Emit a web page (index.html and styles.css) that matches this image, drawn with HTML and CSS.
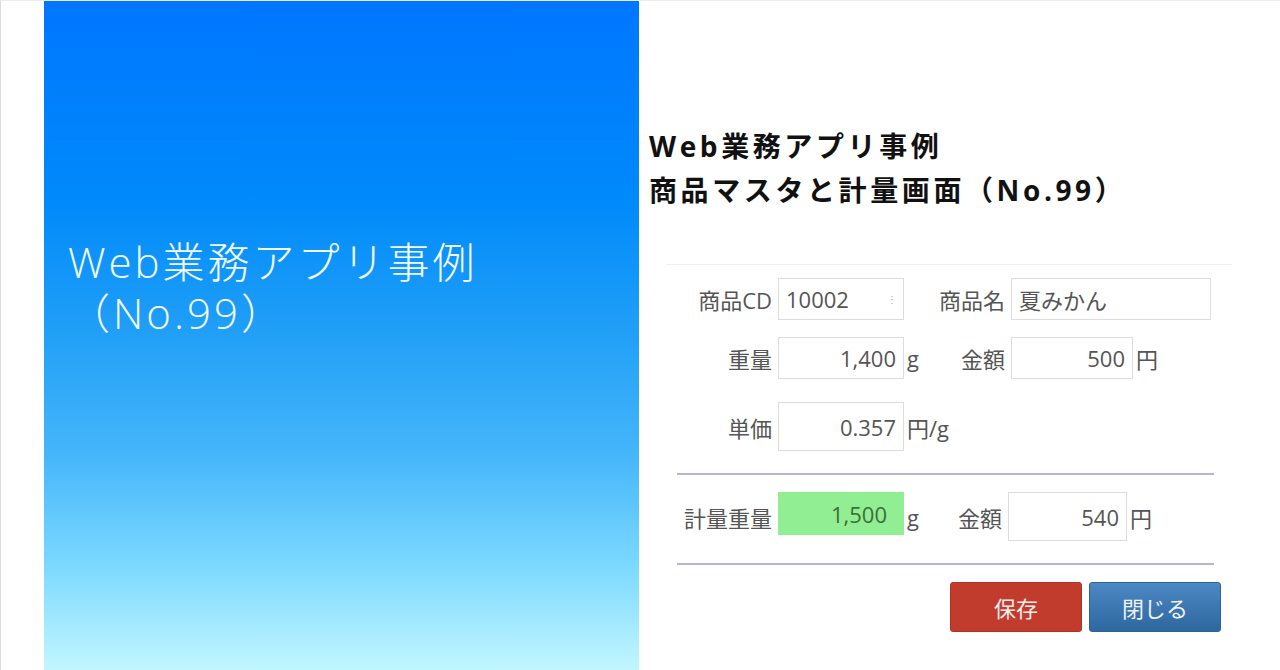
FILE: index.html
```html
<!DOCTYPE html>
<html lang="ja">
<head>
<meta charset="utf-8">
<title>Web業務アプリ事例（No.99）</title>
<link rel="stylesheet" href="styles.css">
</head>
<body>
<div class="page">
  <div class="gutter"></div>
  <section class="hero">
    <h1 class="hero-title"><span class="hero-line">Web業務アプリ事例</span><span class="hero-line">（No.99）</span></h1>
  </section>
  <section class="right">
    <h2 class="heading">Web業務アプリ事例<br>商品マスタと計量画面（No.99）</h2>
    <div class="form">
      <div class="row row-1">
        <span class="label">商品CD</span>
        <div class="field field-h42 field-left">10002<span class="spin">⋮</span></div>
        <span class="unit"></span>
        <span class="label2">商品名</span>
        <div class="field field-h42 field-left field-wide">夏みかん</div>
      </div>
      <div class="row row-2">
        <span class="label">重量</span>
        <div class="field field-h42">1,400</div>
        <span class="unit">g</span>
        <span class="label2">金額</span>
        <div class="field field-h42 field-mid">500</div>
        <span class="unit">円</span>
      </div>
      <div class="row row-3">
        <span class="label">単価</span>
        <div class="field field-h49">0.357</div>
        <span class="unit">円/g</span>
      </div>
      <div class="rule"></div>
      <div class="row row-4">
        <span class="label">計量重量</span>
        <div class="field field-h43 field-green">1,500<span class="spin spin-green">⋮</span></div>
        <span class="unit">g</span>
        <span class="label2 label2-tight">金額</span>
        <div class="field field-h49 field-mid2">540</div>
        <span class="unit">円</span>
      </div>
      <div class="rule rule-2"></div>
      <div class="actions">
        <button class="btn btn-save">保存</button>
        <button class="btn btn-close">閉じる</button>
      </div>
    </div>
  </section>
</div>
</body>
</html>
```
FILE: styles.css
```css
html, body {
  margin: 0;
  padding: 0;
  background: #ffffff;
}

.page {
  width: 1280px;
  height: 670px;
  display: flex;
  box-sizing: border-box;
  border-left: 1px solid #dcdcdc;
  border-top: 1px solid #ececec;
  overflow: hidden;
  font-family: "Open Sans", "Noto Sans CJK JP", sans-serif;
}

.gutter {
  width: 43px;
  flex: none;
}

.hero {
  width: 595px;
  flex: none;
  background: linear-gradient(180deg, #0076ff 0%, #008afa 30%, #22a0f7 50%, #46b6fb 68%, #7ad8fe 84%, #c2f6ff 100%);
  padding: 235px 0 0 24px;
  box-sizing: border-box;
}

.hero-title {
  margin: 0;
  color: #f2fcff;
  font-family: "Open Sans", "Noto Sans CJK JP", sans-serif;
  font-weight: 300;
  font-size: 42px;
  line-height: 51px;
  letter-spacing: 3px;
}

.hero-line {
  display: block;
}

.right {
  flex: 1;
  display: flex;
  flex-direction: column;
  padding: 123px 0 0 10px;
}

.heading {
  margin: 0;
  font-family: "Open Sans", "Noto Sans CJK JP", sans-serif;
  font-weight: 700;
  font-size: 28px;
  line-height: 44px;
  letter-spacing: 3.6px;
  color: #111111;
}

.form {
  margin: 52px 0 0 17px;
  width: 566px;
  border-top: 1px solid #eeeeee;
  padding-top: 13px;
  color: #555555;
  font-size: 22px;
}

.row {
  display: flex;
  align-items: center;
}

.row-2 { margin-top: 17px; }
.row-3 { margin-top: 23px; }

.label {
  width: 112px;
  flex: none;
  text-align: right;
  padding-right: 6px;
  box-sizing: border-box;
  white-space: nowrap;
}

.label2 {
  width: 78px;
  flex: none;
  text-align: right;
  padding-right: 6px;
  box-sizing: border-box;
  white-space: nowrap;
}

.label2-tight { width: 75px; }

.unit {
  width: 26px;
  flex: none;
  padding-left: 3px;
  white-space: nowrap;
}

.row-3 .unit { width: auto; }

.field {
  width: 126px;
  flex: none;
  box-sizing: border-box;
  border: 1px solid #dddddd;
  background: #ffffff;
  display: flex;
  align-items: center;
  justify-content: flex-end;
  padding: 0 7px;
  position: relative;
}

.field-left { justify-content: flex-start; }
.field-wide { width: 200px; }
.field-mid { width: 122px; }
.field-mid2 { width: 119px; }

.field-h42 { height: 42px; }
.field-h43 { height: 43px; }
.field-h49 { height: 49px; }

.field-green {
  background: #92ee92;
  border-color: #92ee92;
  color: #3b6f3b;
  padding-right: 16px;
  align-self: flex-start;
}

.spin {
  position: absolute;
  right: 6px;
  top: 50%;
  transform: translateY(-50%);
  font-size: 10px;
  color: #aaaaaa;
}

.spin-green {
  right: 5px;
  color: #b5dcb5;
}

.rule {
  margin: 22px 0 0 11px;
  width: 537px;
  height: 2px;
  background: #b7b5d3;
}

.row-4 { margin-top: 17px; }

.rule-2 { margin-top: 22px; }

.actions {
  display: flex;
  gap: 7px;
  padding-left: 284px;
  margin-top: 17px;
}

.btn {
  width: 132px;
  height: 50px;
  border-radius: 3px;
  font-family: "Noto Sans CJK JP", sans-serif;
  font-size: 22px;
  color: #f4eaea;
  cursor: pointer;
}

.btn-save {
  background: #c13c2d;
  border: 1px solid #b03426;
}

.btn-close {
  background: linear-gradient(180deg, #4c88c4 0%, #2e679f 100%);
  border: 1px solid #2d6399;
  color: #eef2f8;
}
```
